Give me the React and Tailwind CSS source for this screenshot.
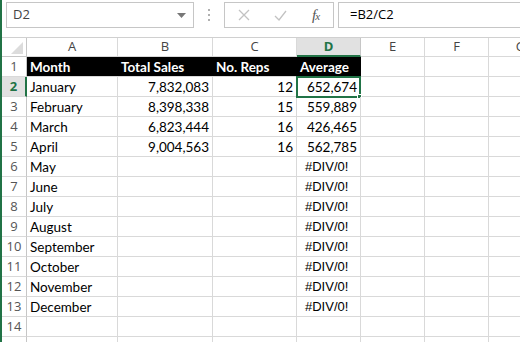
const rows = [
  ['January', '7,832,083', '12', '652,674'],
  ['February', '8,398,338', '15', '559,889'],
  ['March', '6,823,444', '16', '426,465'],
  ['April', '9,004,563', '16', '562,785'],
  ['May', '', '', '#DIV/0!'],
  ['June', '', '', '#DIV/0!'],
  ['July', '', '', '#DIV/0!'],
  ['August', '', '', '#DIV/0!'],
  ['September', '', '', '#DIV/0!'],
  ['October', '', '', '#DIV/0!'],
  ['November', '', '', '#DIV/0!'],
  ['December', '', '', '#DIV/0!'],
]

const cols = 'grid grid-cols-[25px_91px_95px_84px_64px_64px_64px_64px]'
const ui = { fontFamily: '"Open Sans", "Noto Sans", sans-serif' }
const cell = { fontFamily: 'Lato, "Open Sans", sans-serif' }

const Cell = ({ children, className = '' }) => (
  <div className={`h-[20px] border-r border-b border-[#d9d9d9] flex items-end px-[3px] text-[13.5px] leading-[18px] text-black ${className}`} style={cell}>
    {children}
  </div>
)

const RowHead = ({ n, active }) => (
  <div
    className={`h-[20px] border-b border-[#d9d9d9] flex items-center justify-center text-[13px] ${
      active ? 'bg-[#e1e1e1] border-r-2 border-r-[#217346] text-[#217346] font-bold' : 'border-r border-r-[#c6c6c6] text-[#555]'
    }`}
    style={ui}
  >
    {n}
  </div>
)

const Row = ({ n, data }) => (
  <div className={cols}>
    <RowHead n={n} active={n === 2} />
    <Cell>{data[0]}</Cell>
    <Cell className="justify-end">{data[1]}</Cell>
    <Cell className="justify-end">{data[2]}</Cell>
    {data[3] === '#DIV/0!' ? (
      <div className="h-[20px] border-r border-b border-[#d9d9d9] flex items-center pt-[1px] pl-[8px] text-[13px]" style={{ fontFamily: '"Liberation Sans", sans-serif' }}>
        #DIV/0!
      </div>
    ) : (
      <Cell className="justify-end relative">
        {data[3]}
        {n === 2 && (
          <div className="absolute -left-[1px] -top-[1px] w-[65px] h-[22px] border-2 border-[#217346]">
            <div className="absolute -right-[3px] -bottom-[3px] w-[5px] h-[5px] bg-[#217346] border border-white" />
          </div>
        )}
      </Cell>
    )}
    <Cell />
    <Cell />
    <Cell />
  </div>
)

export default function App() {
  return (
    <div className="w-[520px] h-[342px] overflow-hidden bg-white border-l-2 border-[#217346]">
      {/* formula bar */}
      <div className="h-[37px] flex items-start pt-[2px] text-[13px] text-[#444]" style={ui}>
        <div className="ml-[4px] w-[188px] h-[26px] border border-[#c6c6c6] flex items-center justify-between pl-[6px] pr-[7px]">
          <span>D2</span>
          <svg width="9" height="5" viewBox="0 0 9 5"><path d="M0 0h9L4.5 5z" fill="#777" /></svg>
        </div>
        <div className="w-[30px] h-[26px] flex flex-col items-center justify-center gap-[3px]">
          <span className="w-[2px] h-[2px] bg-[#b0b0b0]" />
          <span className="w-[2px] h-[2px] bg-[#b0b0b0]" />
          <span className="w-[2px] h-[2px] bg-[#b0b0b0]" />
        </div>
        <div className="w-[110px] h-[26px] border border-[#c6c6c6] flex items-center">
          <div className="w-[37px] flex justify-center">
            <svg width="12" height="12" viewBox="0 0 12 12"><path d="M1 1l10 10M11 1L1 11" stroke="#c2c2c2" strokeWidth="1.3" /></svg>
          </div>
          <div className="w-[37px] flex justify-center">
            <svg width="13" height="11" viewBox="0 0 13 11"><path d="M1 6l4 4 7-9" stroke="#c2c2c2" strokeWidth="1.3" fill="none" /></svg>
          </div>
          <div className="w-[34px] flex justify-center items-baseline text-[#555] italic" style={{ fontFamily: '"Liberation Serif", serif' }}>
            <span className="text-[15px]">f</span>
            <span className="text-[11px] -ml-[1px]">x</span>
          </div>
        </div>
        <div className="ml-[4px] flex-1 h-[26px] border border-r-0 border-[#c6c6c6] flex items-center pl-[11px] text-black">
          =B2/C2
        </div>
      </div>
      {/* column headers */}
      <div className={`${cols} border-t border-[#d0d0d0] text-[13px] text-[#444]`} style={ui}>
        <div className="h-[19px] border-r border-b border-[#c6c6c6] relative">
          <svg className="absolute right-[3px] bottom-[2px]" width="12" height="12" viewBox="0 0 12 12"><path d="M12 0v12H0z" fill="#dcdcdc" /></svg>
        </div>
        {['A', 'B', 'C', 'D', 'E', 'F', 'G'].map((c) => (
          <div
            key={c}
            className={`h-[19px] flex items-center justify-center border-r ${
              c === 'D' ? 'bg-[#e1e1e1] border-b-2 border-b-[#217346] border-r-[#c6c6c6] text-[#217346] font-bold' : 'border-b border-[#d9d9d9]'
            }`}
          >
            {c}
          </div>
        ))}
      </div>
      {/* row 1 */}
      <div className={cols}>
        <RowHead n={1} />
        <div className="col-span-4 h-[20px] bg-black border-b border-[#d9d9d9] grid grid-cols-[91px_95px_84px_64px] text-white text-[13.5px] leading-[18px] font-bold" style={cell}>
          <div className="flex items-end px-[3px]">Month</div>
          <div className="flex items-end px-[3px]">Total Sales</div>
          <div className="flex items-end px-[3px]">No. Reps</div>
          <div className="flex items-end px-[3px]">Average</div>
        </div>
        <Cell />
        <Cell />
        <Cell />
      </div>
      {rows.map((r, i) => (
        <Row key={i} n={i + 2} data={r} />
      ))}
      <div className={cols}>
        <RowHead n={14} />
        <Cell /><Cell /><Cell /><Cell /><Cell /><Cell /><Cell />
      </div>
      <div className={cols}>
        <RowHead n="" />
        <Cell /><Cell /><Cell /><Cell /><Cell /><Cell /><Cell />
      </div>
    </div>
  )
}
